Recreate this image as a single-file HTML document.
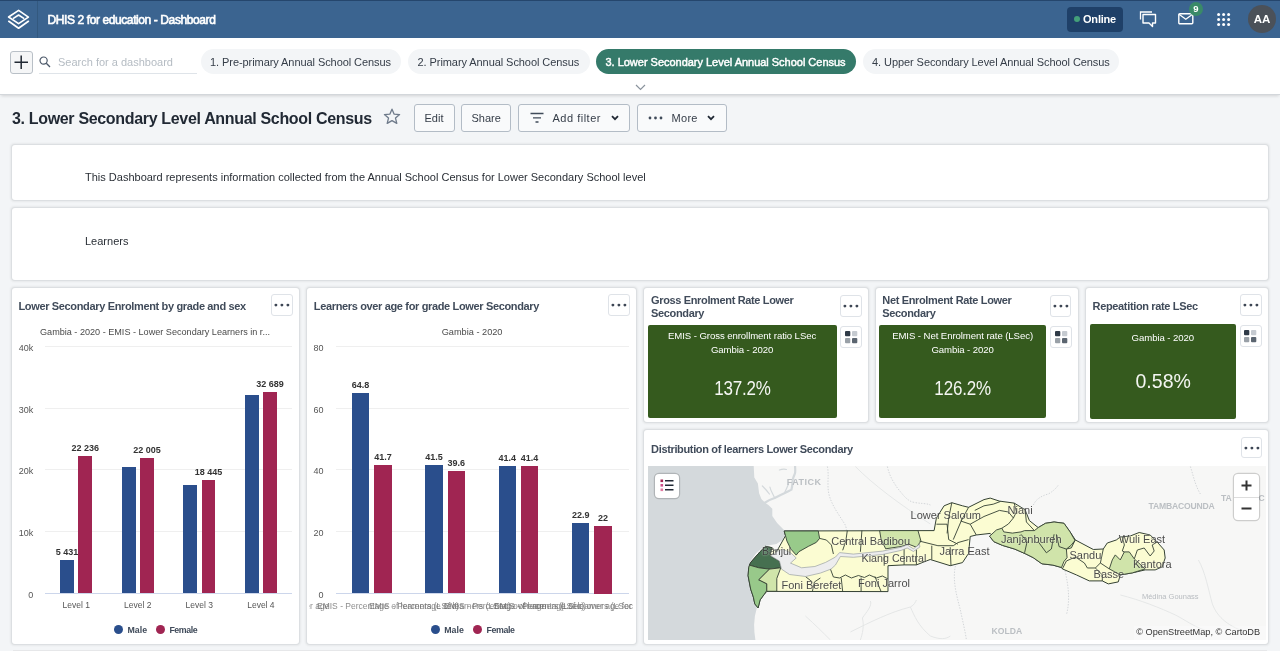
<!DOCTYPE html>
<html><head><meta charset="utf-8">
<style>
*{box-sizing:border-box;margin:0;padding:0}
html,body{width:1280px;height:651px;overflow:hidden;will-change:transform;background:#f3f5f7;font-family:"Liberation Sans",sans-serif;color:#212934}
.a{position:absolute}
.hdr{left:0;top:0;width:1280px;height:38px;background:#3b6490;border-top:1px solid #25466d}
.sep{left:37px;top:1px;width:1px;height:37px;background:#33597f}
.htitle{left:47.5px;top:12.6px;font-size:12px;font-weight:400;color:#fff;letter-spacing:-0.4px;-webkit-text-stroke:0.6px #fff}
.online{left:1067px;top:6.5px;width:55.5px;height:25px;background:#1f4068;border-radius:4px}
.dot{left:1073.5px;top:16px;width:6px;height:6px;border-radius:50%;background:#44a07a}
.onl{left:1083px;top:12.5px;font-size:11px;font-weight:700;color:#fff;letter-spacing:-0.2px}
.bar{left:0;top:38px;width:1280px;height:56.3px;background:#fff;box-shadow:0 1px 0 #d3d7db,0 3px 3px -1px rgba(0,0,0,0.14)}
.plus{left:10px;top:51px;width:22.5px;height:22.5px;border:1px solid #b9c0c7;border-radius:3px;background:#f5f6f7}
.search{left:39px;top:73px;width:158px;height:1px;background:#dfe4e9}
.sph{left:58px;top:55.5px;font-size:11px;color:#b5bcc3}
.chip{top:49px;height:25px;border-radius:13px;background:#f3f5f7;font-size:11px;color:#353d48;line-height:27.3px;padding-left:9.5px;white-space:nowrap;letter-spacing:-0.07px}
.chip.act{background:#357a6a;color:#fff;font-weight:400;letter-spacing:-0.02px;-webkit-text-stroke:0.45px #fff}
.ptitle{left:12px;top:110px;font-size:16px;font-weight:700;color:#212934;letter-spacing:-0.33px;white-space:nowrap}
.btn{top:104px;height:27.5px;border:1px solid #b3bcc6;border-radius:3px;background:#f9fafb;font-size:11px;color:#353d48;line-height:27px;white-space:nowrap}
.card{background:#fff;border-radius:3px;box-shadow:0 0 0 1px #dcdfe2, 0 0 2px 1.5px rgba(0,0,0,0.05)}
.txt{font-size:11px;color:#2a2f36;white-space:nowrap;margin-top:0.7px}
.ctitle{font-size:11px;font-weight:700;color:#404b5a;letter-spacing:-0.35px;white-space:nowrap}
.menu{width:21.5px;height:21.5px;border:1px solid #dfe3e8;border-radius:3px;background:#fff}
.menu i{position:absolute;top:8.7px;width:3.1px;height:3.1px;border-radius:50%;background:#3d4654}
.ax{font-size:8.5px;color:#666;white-space:nowrap}
.lbl{font-size:9px;font-weight:700;color:#333;white-space:nowrap}
.sv{font-size:9.6px;color:#fff;text-align:center;line-height:13.7px;letter-spacing:-0.08px}
.big{font-size:19px;color:#f4f6f2;text-align:center;letter-spacing:-1px}
.male{background:#2a4e8c}
.fem{background:#a02552}
</style></head><body>

<!-- HEADER -->
<div class="a hdr"></div>
<div class="a sep"></div>
<svg class="a" style="left:0;top:0" width="37" height="38" viewBox="0 0 37 38">
  <path d="M18.6 10.4 L28.4 17.1 L18.6 23.6 L8.6 17 Z" fill="none" stroke="#fff" stroke-width="1.7" stroke-linejoin="round"/>
  <path d="M13 18.6 L18.6 15 L24.2 18.6" fill="none" stroke="#fff" stroke-width="1.6" stroke-linejoin="round"/>
  <path d="M8.8 21.3 L18.6 28.2 L28.4 21.3" fill="none" stroke="#fff" stroke-width="1.7" stroke-linejoin="round" stroke-linecap="round"/>
</svg>
<div class="a htitle">DHIS 2 for education - Dashboard</div>
<div class="a online"></div>
<div class="a dot"></div>
<div class="a onl">Online</div>
<!-- chat icon -->
<svg class="a" style="left:1139px;top:10px" width="18" height="18" viewBox="0 0 18 18">
  <path d="M1.5 9.5 V2 H13" fill="none" stroke="#fff" stroke-width="1.3"/>
  <path d="M4 4.5 H16.5 V13 H13.5 V16.5 L10 13 H4 Z" fill="none" stroke="#fff" stroke-width="1.4" stroke-linejoin="round"/>
</svg>
<!-- mail icon -->
<svg class="a" style="left:1178px;top:13px" width="16" height="12" viewBox="0 0 16 12">
  <rect x="0.8" y="0.8" width="14" height="10" rx="1" fill="none" stroke="#fff" stroke-width="1.4"/>
  <path d="M1 1.3 L7.8 6.3 L14.6 1.3" fill="none" stroke="#fff" stroke-width="1.3"/>
</svg>
<div class="a" style="left:1189px;top:2px;width:14px;height:14px;border-radius:50%;background:#3a8a68"></div>
<div class="a" style="left:1189px;top:3px;width:14px;text-align:center;font-size:9.5px;font-weight:700;color:#fff">9</div>
<!-- apps -->
<svg class="a" style="left:1217px;top:12.5px" width="14" height="14" viewBox="0 0 14 14" fill="#fff">
  <circle cx="1.6" cy="1.6" r="1.5"/><circle cx="6.6" cy="1.6" r="1.5"/><circle cx="11.6" cy="1.6" r="1.5"/>
  <circle cx="1.6" cy="6.6" r="1.5"/><circle cx="6.6" cy="6.6" r="1.5"/><circle cx="11.6" cy="6.6" r="1.5"/>
  <circle cx="1.6" cy="11.6" r="1.5"/><circle cx="6.6" cy="11.6" r="1.5"/><circle cx="11.6" cy="11.6" r="1.5"/>
</svg>
<div class="a" style="left:1248px;top:5px;width:28px;height:28px;border-radius:50%;background:#4b5159"></div>
<div class="a" style="left:1248px;top:13px;width:28px;text-align:center;font-size:11.5px;font-weight:700;color:#fff">AA</div>

<!-- BAR -->
<div class="a bar"></div>
<div class="a plus"></div>
<svg class="a" style="left:14px;top:55px" width="15" height="15" viewBox="0 0 15 15"><path d="M7.2 0.5 V14 M0.5 7.2 H14" stroke="#212934" stroke-width="1.5"/></svg>
<svg class="a" style="left:39px;top:56px" width="12" height="12" viewBox="0 0 12 12"><circle cx="4.6" cy="4.6" r="3.6" fill="none" stroke="#4a5768" stroke-width="1.2"/><path d="M7.3 7.3 L11 11" stroke="#4a5768" stroke-width="1.3"/></svg>
<div class="a sph">Search for a dashboard</div>
<div class="a search"></div>
<div class="a chip" style="left:200.5px;width:200.5px">1. Pre-primary Annual School Census</div>
<div class="a chip" style="left:408px;width:181.5px">2. Primary Annual School Census</div>
<div class="a chip act" style="left:596px;width:259.5px">3. Lower Secondary Level Annual School Census</div>
<div class="a chip" style="left:862.5px;width:256px">4. Upper Secondary Level Annual School Census</div>
<svg class="a" style="left:635px;top:84px" width="11" height="7" viewBox="0 0 11 7"><path d="M1 1 L5.5 5.5 L10 1" fill="none" stroke="#8a939d" stroke-width="1.2"/></svg>

<!-- TITLE ROW -->
<div class="a ptitle">3. Lower Secondary Level Annual School Census</div>
<svg class="a" style="left:383px;top:108px" width="18" height="17" viewBox="0 0 18 17"><path d="M9 1.2 L11.2 6.2 L16.6 6.6 L12.5 10.1 L13.8 15.4 L9 12.6 L4.2 15.4 L5.5 10.1 L1.4 6.6 L6.8 6.2 Z" fill="none" stroke="#6e7a8a" stroke-width="1.3" stroke-linejoin="round"/></svg>
<div class="a btn" style="left:414px;width:40.5px;padding-left:9.5px">Edit</div>
<div class="a btn" style="left:461px;width:50px;padding-left:9.5px">Share</div>
<div class="a btn" style="left:518px;width:112px;padding-left:33.5px;letter-spacing:0.5px">Add filter</div>
<svg class="a" style="left:530px;top:112px" width="14" height="12" viewBox="0 0 14 12"><path d="M0.5 1.5 H13.5 M3 5.8 H11 M5.5 10 H8.5" stroke="#404b5a" stroke-width="1.3"/></svg>
<svg class="a" style="left:611px;top:115px" width="8" height="6" viewBox="0 0 8 6"><path d="M1 1.2 L4 4.2 L7 1.2" fill="none" stroke="#212934" stroke-width="1.8"/></svg>
<div class="a btn" style="left:636.5px;width:90px;padding-left:34px;letter-spacing:0.3px">More</div>
<svg class="a" style="left:648px;top:116px" width="16" height="4" viewBox="0 0 16 4" fill="#404b5a"><circle cx="2" cy="2" r="1.4"/><circle cx="7.5" cy="2" r="1.4"/><circle cx="13" cy="2" r="1.4"/></svg>
<svg class="a" style="left:707px;top:115px" width="8" height="6" viewBox="0 0 8 6"><path d="M1 1.2 L4 4.2 L7 1.2" fill="none" stroke="#212934" stroke-width="1.8"/></svg>

<!-- TEXT CARDS -->
<div class="a card" style="left:12px;top:145px;width:1256px;height:55px"></div>
<div class="a txt" style="left:85px;top:170px">This Dashboard represents information collected from the Annual School Census for Lower Secondary School level</div>
<div class="a card" style="left:12px;top:208px;width:1256px;height:72px"></div>
<div class="a txt" style="left:85px;top:234px">Learners</div>

<!--CHARTS-->
<div class="a" style="left:13px;top:650px;width:1254px;height:1px;background:#e6e7e9"></div>
<!--AB-->
<div class="a card" style="left:12px;top:288px;width:287.0px;height:356.0px"></div>
<div class="a ctitle" style="left:18.5px;top:300px">Lower Secondary Enrolment by grade and sex</div>
<div class="a menu" style="left:271px;top:294.2px"><svg class="a" style="left:0;top:0" width="20" height="20" viewBox="0 0 20 20" fill="#3d4654"><circle cx="3.9" cy="10.1" r="1.45"/><circle cx="9.9" cy="10.1" r="1.45"/><circle cx="15.9" cy="10.1" r="1.45"/></svg></div>
<div class="a ax" style="left:40px;top:326.5px;font-size:9.1px;color:#4a4a4a">Gambia - 2020 - EMIS - Lower Secondary Learners in r...</div>
<div class="a ax" style="right:1246.7px;top:589.9px;font-size:9px;color:#555">0</div>
<div class="a" style="left:45.4px;top:531.2px;width:246.3px;height:1px;background:#efefef"></div>
<div class="a ax" style="right:1246.7px;top:528.1px;font-size:9px;color:#555">10k</div>
<div class="a" style="left:45.4px;top:469.4px;width:246.3px;height:1px;background:#efefef"></div>
<div class="a ax" style="right:1246.7px;top:466.3px;font-size:9px;color:#555">20k</div>
<div class="a" style="left:45.4px;top:407.7px;width:246.3px;height:1px;background:#efefef"></div>
<div class="a ax" style="right:1246.7px;top:404.6px;font-size:9px;color:#555">30k</div>
<div class="a" style="left:45.4px;top:345.9px;width:246.3px;height:1px;background:#efefef"></div>
<div class="a ax" style="right:1246.7px;top:342.8px;font-size:9px;color:#555">40k</div>
<div class="a" style="left:45.4px;top:593.0px;width:246.3px;height:1px;background:#ccd6eb"></div>
<div class="a male" style="left:60.2px;top:559.9px;width:13.9px;height:33.6px"></div>
<div class="a lbl" style="left:37.1px;width:60px;text-align:center;top:546.9px">5 431</div>
<div class="a fem" style="left:78.4px;top:456.1px;width:13.9px;height:137.4px"></div>
<div class="a lbl" style="left:55.3px;width:60px;text-align:center;top:443.1px">22 236</div>
<div class="a ax" style="left:46.2px;width:60px;text-align:center;top:600px;color:#555">Level 1</div>
<div class="a male" style="left:121.8px;top:467.3px;width:13.9px;height:126.2px"></div>
<div class="a fem" style="left:140.0px;top:457.6px;width:13.9px;height:135.9px"></div>
<div class="a lbl" style="left:116.9px;width:60px;text-align:center;top:444.6px">22 005</div>
<div class="a ax" style="left:107.8px;width:60px;text-align:center;top:600px;color:#555">Level 2</div>
<div class="a male" style="left:183.3px;top:484.6px;width:13.9px;height:108.9px"></div>
<div class="a fem" style="left:201.5px;top:479.6px;width:13.9px;height:113.9px"></div>
<div class="a lbl" style="left:178.5px;width:60px;text-align:center;top:466.6px">18 445</div>
<div class="a ax" style="left:169.3px;width:60px;text-align:center;top:600px;color:#555">Level 3</div>
<div class="a male" style="left:244.9px;top:394.6px;width:13.9px;height:198.9px"></div>
<div class="a fem" style="left:263.1px;top:391.6px;width:13.9px;height:201.9px"></div>
<div class="a lbl" style="left:240.1px;width:60px;text-align:center;top:378.6px">32 689</div>
<div class="a ax" style="left:230.9px;width:60px;text-align:center;top:600px;color:#555">Level 4</div>
<div class="a male" style="left:114px;top:625px;width:9px;height:9px;border-radius:50%"></div>
<div class="a lbl" style="left:127.5px;top:624.5px;color:#404b5a;font-size:8.8px">Male</div>
<div class="a fem" style="left:156.3px;top:625px;width:9px;height:9px;border-radius:50%"></div>
<div class="a lbl" style="left:169.4px;top:624.5px;color:#404b5a;font-size:8.8px;letter-spacing:-0.4px">Female</div>
<div class="a card" style="left:307px;top:288px;width:329.0px;height:356.0px"></div>
<div class="a ctitle" style="left:313.8px;top:300px">Learners over age for grade Lower Secondary</div>
<div class="a menu" style="left:608.3px;top:294.2px"><svg class="a" style="left:0;top:0" width="20" height="20" viewBox="0 0 20 20" fill="#3d4654"><circle cx="3.9" cy="10.1" r="1.45"/><circle cx="9.9" cy="10.1" r="1.45"/><circle cx="15.9" cy="10.1" r="1.45"/></svg></div>
<div class="a ax" style="left:441.7px;width:60px;text-align:center;top:326.5px;font-size:9.2px;color:#4a4a4a">Gambia - 2020</div>
<div class="a ax" style="right:956.5px;top:589.9px;font-size:9px;color:#555">0</div>
<div class="a" style="left:335.5px;top:531.2px;width:293.5px;height:1px;background:#efefef"></div>
<div class="a ax" style="right:956.5px;top:528.1px;font-size:9px;color:#555">20</div>
<div class="a" style="left:335.5px;top:469.4px;width:293.5px;height:1px;background:#efefef"></div>
<div class="a ax" style="right:956.5px;top:466.3px;font-size:9px;color:#555">40</div>
<div class="a" style="left:335.5px;top:407.7px;width:293.5px;height:1px;background:#efefef"></div>
<div class="a ax" style="right:956.5px;top:404.6px;font-size:9px;color:#555">60</div>
<div class="a" style="left:335.5px;top:345.9px;width:293.5px;height:1px;background:#efefef"></div>
<div class="a ax" style="right:956.5px;top:342.8px;font-size:9px;color:#555">80</div>
<div class="a" style="left:335.5px;top:593.0px;width:293.5px;height:1px;background:#ccd6eb"></div>
<div class="a male" style="left:351.9px;top:393.3px;width:17.4px;height:200.2px"></div>
<div class="a lbl" style="left:330.6px;width:60px;text-align:center;top:380.3px">64.8</div>
<div class="a fem" style="left:374.2px;top:464.7px;width:17.4px;height:128.8px"></div>
<div class="a lbl" style="left:352.9px;width:60px;text-align:center;top:451.7px">41.7</div>
<div class="a male" style="left:425.3px;top:465.3px;width:17.4px;height:128.2px"></div>
<div class="a lbl" style="left:404.0px;width:60px;text-align:center;top:452.3px">41.5</div>
<div class="a fem" style="left:447.6px;top:471.2px;width:17.4px;height:122.3px"></div>
<div class="a lbl" style="left:426.3px;width:60px;text-align:center;top:458.2px">39.6</div>
<div class="a male" style="left:498.6px;top:465.6px;width:17.4px;height:127.9px"></div>
<div class="a lbl" style="left:477.3px;width:60px;text-align:center;top:452.6px">41.4</div>
<div class="a fem" style="left:520.9px;top:465.6px;width:17.4px;height:127.9px"></div>
<div class="a lbl" style="left:499.6px;width:60px;text-align:center;top:452.6px">41.4</div>
<div class="a male" style="left:572.0px;top:522.8px;width:17.4px;height:70.7px"></div>
<div class="a lbl" style="left:550.7px;width:60px;text-align:center;top:509.8px">22.9</div>
<div class="a fem" style="left:594.3px;top:525.5px;width:17.4px;height:68.0px"></div>
<div class="a lbl" style="left:573.0px;width:60px;text-align:center;top:512.5px">22</div>
<div class="a" style="left:307px;top:601px;left:309px;width:324px;height:12px;overflow:hidden">
<span class="a ax" style="left:-40.0px;top:0;color:#666;opacity:0.75">(LSec) over age</span>
<span class="a ax" style="left:8.0px;top:0;color:#666;opacity:0.75">EMIS - Percentage of learners (LSec)</span>
<span class="a ax" style="left:60.0px;top:0;color:#666;opacity:0.75">EMIS - Percentage of learners (LSec) over age</span>
<span class="a ax" style="left:135.0px;top:0;color:#666;opacity:0.75">EMIS - Percentage of learners (LSec)</span>
<span class="a ax" style="left:185.0px;top:0;color:#666;opacity:0.75">EMIS - Percentage of learners (LSec)</span>
<span class="a ax" style="left:250.0px;top:0;color:#666;opacity:0.75">(LSec) over age for</span>
</div>
<div class="a male" style="left:430.8px;top:625px;width:9px;height:9px;border-radius:50%"></div>
<div class="a lbl" style="left:444.3px;top:624.5px;color:#404b5a;font-size:8.8px">Male</div>
<div class="a fem" style="left:473.1px;top:625px;width:9px;height:9px;border-radius:50%"></div>
<div class="a lbl" style="left:486.6px;top:624.5px;color:#404b5a;font-size:8.8px;letter-spacing:-0.4px">Female</div>
<!--/AB-->
<!--CDE-->
<div class="a card" style="left:644px;top:288px;width:224.0px;height:134.0px"></div>
<div class="a ctitle" style="left:651px;top:294px;line-height:12.7px;white-space:normal;width:170px">Gross Enrolment Rate Lower Secondary</div>
<div class="a menu" style="left:840.4px;top:295.1px"><svg class="a" style="left:0;top:0" width="20" height="20" viewBox="0 0 20 20" fill="#3d4654"><circle cx="3.9" cy="10.1" r="1.45"/><circle cx="9.9" cy="10.1" r="1.45"/><circle cx="15.9" cy="10.1" r="1.45"/></svg></div>
<div class="a" style="left:647.6px;top:325.4px;width:189px;height:93.1px;background:#355a1e;border-radius:2px"></div>
<div class="a menu" style="left:840.4px;top:326.4px"><svg class="a" style="left:3.3px;top:3.8px" width="13" height="13" viewBox="0 0 13 13"><rect x="0" y="0" width="5.3" height="5.3" rx="1" fill="#2f3a47"/><rect x="7" y="0" width="5.3" height="5.3" rx="1" fill="#c5cad0"/><rect x="0" y="7" width="5.3" height="5.3" rx="1" fill="#99a0a7"/><rect x="7" y="7" width="5.3" height="5.3" rx="1" fill="#5b6570"/></svg></div>
<div class="a sv" style="left:647.6px;top:329.2px;width:189.0px;">EMIS - Gross enrollment ratio LSec<br>Gambia - 2020</div>
<div class="a big" style="left:647.6px;top:376.5px;width:189.0px;font-size:20px;letter-spacing:-0.2px;transform:scaleX(0.85)">137.2%</div>
<div class="a card" style="left:876px;top:288px;width:202.0px;height:134.0px"></div>
<div class="a ctitle" style="left:882.3px;top:294px;line-height:12.7px;white-space:normal;width:160px">Net Enrolment Rate Lower Secondary</div>
<div class="a menu" style="left:1049.8px;top:295.1px"><svg class="a" style="left:0;top:0" width="20" height="20" viewBox="0 0 20 20" fill="#3d4654"><circle cx="3.9" cy="10.1" r="1.45"/><circle cx="9.9" cy="10.1" r="1.45"/><circle cx="15.9" cy="10.1" r="1.45"/></svg></div>
<div class="a" style="left:878.9px;top:325.4px;width:167.4px;height:93.1px;background:#355a1e;border-radius:2px"></div>
<div class="a menu" style="left:1050.3px;top:326.4px"><svg class="a" style="left:3.3px;top:3.8px" width="13" height="13" viewBox="0 0 13 13"><rect x="0" y="0" width="5.3" height="5.3" rx="1" fill="#2f3a47"/><rect x="7" y="0" width="5.3" height="5.3" rx="1" fill="#c5cad0"/><rect x="0" y="7" width="5.3" height="5.3" rx="1" fill="#99a0a7"/><rect x="7" y="7" width="5.3" height="5.3" rx="1" fill="#5b6570"/></svg></div>
<div class="a sv" style="left:878.9px;top:329.2px;width:167.4px;">EMIS - Net Enrolment rate (LSec)<br>Gambia - 2020</div>
<div class="a big" style="left:878.9px;top:376.5px;width:167.4px;font-size:20px;letter-spacing:-0.2px;transform:scaleX(0.85)">126.2%</div>
<div class="a card" style="left:1086px;top:288px;width:182.0px;height:134.0px"></div>
<div class="a ctitle" style="left:1092.6px;top:300px">Repeatition rate LSec</div>
<div class="a menu" style="left:1240.1px;top:294.3px"><svg class="a" style="left:0;top:0" width="20" height="20" viewBox="0 0 20 20" fill="#3d4654"><circle cx="3.9" cy="10.1" r="1.45"/><circle cx="9.9" cy="10.1" r="1.45"/><circle cx="15.9" cy="10.1" r="1.45"/></svg></div>
<div class="a" style="left:1089.6px;top:323.8px;width:146.4px;height:95px;background:#355a1e;border-radius:2px"></div>
<div class="a menu" style="left:1240.1px;top:325.2px"><svg class="a" style="left:3.3px;top:3.8px" width="13" height="13" viewBox="0 0 13 13"><rect x="0" y="0" width="5.3" height="5.3" rx="1" fill="#2f3a47"/><rect x="7" y="0" width="5.3" height="5.3" rx="1" fill="#c5cad0"/><rect x="0" y="7" width="5.3" height="5.3" rx="1" fill="#99a0a7"/><rect x="7" y="7" width="5.3" height="5.3" rx="1" fill="#5b6570"/></svg></div>
<div class="a sv" style="left:1089.6px;top:330.5px;width:146.4px;">Gambia - 2020</div>
<div class="a big" style="left:1089.6px;top:369px;width:146.4px;font-size:21px;letter-spacing:0px;transform:scaleX(0.93)">0.58%</div>
<!--/CDE-->
<!--MAP-->
<div class="a card" style="left:644px;top:430px;width:624.0px;height:214.0px"></div>
<div class="a ctitle" style="left:651.1px;top:442.5px">Distribution of learners Lower Secondary</div>
<div class="a menu" style="left:1240.8px;top:436.6px"><svg class="a" style="left:0;top:0" width="20" height="20" viewBox="0 0 20 20" fill="#3d4654"><circle cx="3.9" cy="10.1" r="1.45"/><circle cx="9.9" cy="10.1" r="1.45"/><circle cx="15.9" cy="10.1" r="1.45"/></svg></div>
<svg class="a" style="left:647.6px;top:466px" width="618.2" height="174.1" viewBox="647.6 466 618.2 174.1">
<rect x="647.6" y="466" width="618.2" height="174.1" fill="#f7f7f6"/>
<path d="M647.6,466.0 L753.3,466.0 L753.9,477.6 L757.5,483.6 L758.7,493.2 L761.0,499.0 L764.7,502.8 L768.0,505.0 L771.9,508.7 L771.9,515.9 L776.7,523.1 L783.9,530.3 L785.0,534.0 L782.0,540.0 L776.0,544.0 L770.0,545.0 L764.0,546.2 L756.0,553.0 L750.8,560.0 L747.7,567.0 L747.7,576.0 L750.0,585.0 L752.5,594.0 L755.0,601.0 L756.5,607.8 L754.5,616.0 L753.7,624.8 L754.0,632.0 L755.0,640.1 L647.6,640.1 Z" fill="#d4d9dc"/>
<path d="M764,503 C768,500 771,499 774.3,498 C778,496 781,494.5 783.9,493.2 C787,491.5 789.5,490.5 791.1,489.6 C792,486 792,483 792.3,480 C793,476 794.7,474 794.7,472.8 C795,470 794.7,468 794.7,466.5" fill="none" stroke="#d4d9dc" stroke-width="2.2" stroke-linecap="round"/>
<path d="M774.3,498 C772,493 770,490 769.5,487 M769,494 C766,490 764,488 762,486 M783.9,493.2 C786,489 787,487 788,484 M779,470 C782,469 784,469 786,469.5" fill="none" stroke="#d4d9dc" stroke-width="1.2" stroke-linecap="round"/>
<path d="M827,466.5 C829,476 826,486 829,496 C832,506 838,514 843,522 C846,526 846,529 846,531 M887,466.5 C889,476 893,482 897,488 C902,494 906,500 912,502 C920,504 926,503 930,505 M1033,505 C1035,500 1040,496 1048,494 C1053,491 1056,488 1058,485 M1064,568 C1068,585 1070,600 1066,615 M955,566 C952,580 956,595 960,610 C962,620 965,632 966,640 M1190,466.5 C1193,476 1195,486 1200,494" fill="none" stroke="#c9cdd0" stroke-width="0.8" stroke-dasharray="1.4,1.4"/>
<path d="M1120,595 C1140,600 1160,608 1175,615 C1185,620 1195,628 1210,632 M1198,560 C1205,572 1208,590 1212,604 C1216,615 1225,625 1245,632 M805,616 C815,625 822,632 830,640 M855,466.5 C872,484 900,505 930,524" fill="none" stroke="#e3e5e5" stroke-width="0.9"/>
<path d="M870,601 C872,606 866,612 862,618 C864,626 862,634 860,640 M850,632 C870,622 890,612 910,607 C914,605 915,602 916,600 M910,607 C914,616 918,626 930,636 C940,640 946,639 950,636" fill="none" stroke="#e2e4e4" stroke-width="0.9"/>
<path d="M783.8,531.0 L933.7,530.6 L936.0,518.0 L943.7,505.8 L951.4,502.7 L962.1,505.8 L968.2,507.3 L983.6,499.6 L989.8,498.1 L999.0,501.1 L1013.8,503.1 L1024.7,509.7 L1029.0,520.6 L1037.8,527.6 L1045.1,523.3 L1053.7,522.0 L1063.6,523.3 L1069.7,531.9 L1075.0,540.0 L1092.9,549.5 L1102.9,549.0 L1106.9,543.0 L1115.9,540.0 L1119.9,537.0 L1129.9,536.0 L1138.8,532.5 L1149.8,535.0 L1156.8,542.0 L1163.8,550.0 L1164.8,558.0 L1161.8,566.9 L1154.8,569.9 L1144.8,569.9 L1131.9,572.9 L1119.9,574.9 L1117.9,581.9 L1107.9,583.9 L1101.9,580.9 L1088.9,580.9 L1076.0,574.9 L1062.0,568.9 L1061.1,567.5 L1052.5,565.1 L1041.5,563.8 L1032.9,557.7 L1025.5,554.0 L1014.4,549.1 L1002.1,545.4 L993.5,541.7 L989.2,536.2 L991.3,538.0 L1000.0,544.2 L989.8,533.4 L975.9,535.0 L969.8,536.5 L968.2,553.4 L962.1,562.6 L949.8,565.7 L929.8,559.5 L916.0,564.9 L903.7,564.9 L887.6,565.7 L887.6,591.6 L766.4,591.4 L763.7,594.5 L759.7,599.9 L757.7,607.9 L754.4,603.9 L753.0,597.2 L750.3,589.2 L747.7,575.8 L748.3,567.8 L750.3,562.4 L759.7,551.7 L765.1,546.4 L771.7,547.7 L776.0,552.0 L785.1,535.7 Z" fill="#fbfcd2" stroke="#334033" stroke-width="1" stroke-linejoin="round"/>
<path d="M783.8,531.0 L817.9,531.0 L819.2,538.4 L815.9,542.4 L807.9,546.4 L798.5,551.7 L795.8,555.1 L790.5,549.1 L786.5,541.0 L785.1,535.7 Z" fill="#98ca8a" stroke="#334033" stroke-width="0.9" stroke-linejoin="round"/>
<path d="M750.3,562.4 L759.7,551.7 L765.1,546.4 L771.7,547.7 L769.7,555.8 L779.1,561.1 L780.4,567.8 L769.1,569.1 L758.4,567.8 L749.0,565.1 Z" fill="#467050" stroke="#334033" stroke-width="0.9" stroke-linejoin="round"/>
<path d="M749.0,565.1 L758.4,567.8 L769.1,569.1 L765.1,573.1 L758.4,579.8 L766.4,583.8 L766.4,590.5 L763.7,594.5 L759.7,599.9 L757.7,607.9 L754.4,603.9 L753.0,597.2 L750.3,589.2 L747.7,575.8 L748.3,567.8 Z" fill="#98c98a" stroke="#334033" stroke-width="0.9" stroke-linejoin="round"/>
<path d="M769.1,569.1 L780.4,567.8 L776.4,578.5 L776.4,591.3 L766.4,591.3 L766.4,583.8 L758.4,579.8 L765.1,573.1 Z" fill="#d0e5aa" stroke="#334033" stroke-width="0.9" stroke-linejoin="round"/>
<path d="M879.2,530.6 L917.6,530.6 L920.6,541.1 L916.0,547.2 L908.3,544.2 L900.7,546.5 L885.3,548.8 L880.7,539.5 Z" fill="#d0e5aa" stroke="#334033" stroke-width="0.9" stroke-linejoin="round"/>
<path d="M989.2,536.2 L996.0,530.0 L1001.5,528.2 L1003.4,531.9 L1012.0,533.1 L1020.6,531.9 L1024.2,530.6 L1034.0,530.6 L1037.8,527.6 L1045.1,523.3 L1053.7,522.0 L1063.6,523.3 L1069.7,531.9 L1074.6,540.5 L1071.0,547.9 L1066.0,549.1 L1066.7,557.7 L1063.6,561.4 L1061.1,567.5 L1052.5,565.1 L1041.5,563.8 L1032.9,557.7 L1025.5,554.0 L1014.4,549.1 L1002.1,545.4 L993.5,541.7 Z" fill="#d0e4aa" stroke="#334033" stroke-width="0.9" stroke-linejoin="round"/>
<path d="M1108.9,568.9 L1111.9,559.9 L1114.9,554.9 L1119.9,559.9 L1123.9,551.9 L1128.9,551.9 L1133.9,558.9 L1144.8,568.9 L1131.9,572.9 L1119.9,574.9 Z" fill="#d0e4aa" stroke="#334033" stroke-width="0.9" stroke-linejoin="round"/>
<path d="M819.2,538.4 L826.0,540.0 L831.0,545.0 L833.0,554.0" fill="none" stroke="#334033" stroke-width="0.9" stroke-linejoin="round"/>
<path d="M846.9,530.6 L845.4,541.1 L842.3,550.3" fill="none" stroke="#334033" stroke-width="0.9" stroke-linejoin="round"/>
<path d="M861.5,530.6 L860.0,551.8" fill="none" stroke="#334033" stroke-width="0.9" stroke-linejoin="round"/>
<path d="M883.8,551.8 L883.8,565.7" fill="none" stroke="#334033" stroke-width="0.9" stroke-linejoin="round"/>
<path d="M903.7,547.2 L903.7,564.9" fill="none" stroke="#334033" stroke-width="0.9" stroke-linejoin="round"/>
<path d="M916.0,549.5 L916.0,564.9" fill="none" stroke="#334033" stroke-width="0.9" stroke-linejoin="round"/>
<path d="M919.1,541.1 L937.5,545.7 L952.9,545.7 L957.5,542.6 L968.2,539.6" fill="none" stroke="#334033" stroke-width="0.9" stroke-linejoin="round"/>
<path d="M931.4,545.7 L931.4,559.5" fill="none" stroke="#334033" stroke-width="0.9" stroke-linejoin="round"/>
<path d="M949.8,547.2 L950.6,565.7" fill="none" stroke="#334033" stroke-width="0.9" stroke-linejoin="round"/>
<path d="M812.0,591.4 L814.0,582.0 L820.0,578.0" fill="none" stroke="#334033" stroke-width="0.9" stroke-linejoin="round"/>
<path d="M805.0,576.5 L812.0,582.0" fill="none" stroke="#334033" stroke-width="0.9" stroke-linejoin="round"/>
<path d="M830.0,569.0 L833.0,577.0 L839.2,578.0 L845.0,575.0 L851.0,578.0 L858.0,575.5 L864.0,577.5 L869.0,575.0 L876.0,578.0 L882.0,576.0 L887.6,579.0" fill="none" stroke="#334033" stroke-width="0.9" stroke-linejoin="round"/>
<path d="M840.8,578.0 L842.3,591.6" fill="none" stroke="#334033" stroke-width="0.9" stroke-linejoin="round"/>
<path d="M860.7,577.5 L860.7,591.6" fill="none" stroke="#334033" stroke-width="0.9" stroke-linejoin="round"/>
<path d="M874.5,576.4 L880.7,591.6" fill="none" stroke="#334033" stroke-width="0.9" stroke-linejoin="round"/>
<path d="M936.0,524.2 L946.7,524.2 L948.3,539.6 L957.5,544.2" fill="none" stroke="#334033" stroke-width="0.9" stroke-linejoin="round"/>
<path d="M951.4,502.7 L948.3,518.0 L946.7,533.4" fill="none" stroke="#334033" stroke-width="0.9" stroke-linejoin="round"/>
<path d="M962.1,518.0 L952.9,539.6" fill="none" stroke="#334033" stroke-width="0.9" stroke-linejoin="round"/>
<path d="M968.2,507.3 L960.6,521.1 L969.8,524.2 L975.9,535.0" fill="none" stroke="#334033" stroke-width="0.9" stroke-linejoin="round"/>
<path d="M969.8,524.2 L983.6,516.5 L999.0,510.4 L1008.0,512.0 L1013.0,518.0 L1008.0,524.0 L1001.5,528.2" fill="none" stroke="#334033" stroke-width="0.9" stroke-linejoin="round"/>
<path d="M974.4,510.4 L983.6,505.8 L992.8,504.2 L1000.0,501.5" fill="none" stroke="#334033" stroke-width="0.9" stroke-linejoin="round"/>
<path d="M1013.8,503.1 L1016.0,512.0 L1013.0,518.0" fill="none" stroke="#334033" stroke-width="0.9" stroke-linejoin="round"/>
<path d="M1024.7,509.7 L1026.0,522.0 L1034.0,530.6" fill="none" stroke="#334033" stroke-width="0.9" stroke-linejoin="round"/>
<path d="M1024.2,552.8 L1026.7,541.7 L1020.6,534.3" fill="none" stroke="#334033" stroke-width="0.9" stroke-linejoin="round"/>
<path d="M1037.8,541.7 L1046.0,552.8 L1051.0,549.0 L1053.7,534.3" fill="none" stroke="#334033" stroke-width="0.9" stroke-linejoin="round"/>
<path d="M1056.0,534.3 L1058.7,546.6 L1066.0,549.1" fill="none" stroke="#334033" stroke-width="0.9" stroke-linejoin="round"/>
<path d="M1062.0,568.9 L1066.0,561.0 L1075.0,557.0 L1084.0,563.0 L1087.0,568.0 L1095.0,568.0 L1100.0,563.0 L1102.9,549.0" fill="none" stroke="#334033" stroke-width="0.9" stroke-linejoin="round"/>
<path d="M1066.0,549.1 L1071.0,545.0 L1075.0,540.0" fill="none" stroke="#334033" stroke-width="0.9" stroke-linejoin="round"/>
<path d="M1095.0,568.0 L1102.0,575.0 L1101.9,580.9" fill="none" stroke="#334033" stroke-width="0.9" stroke-linejoin="round"/>
<path d="M1100.0,563.0 L1108.9,568.9" fill="none" stroke="#334033" stroke-width="0.9" stroke-linejoin="round"/>
<path d="M1121.9,537.0 L1124.0,545.0 L1121.9,551.0 L1123.9,551.9" fill="none" stroke="#334033" stroke-width="0.9" stroke-linejoin="round"/>
<path d="M1133.9,558.9 L1137.0,550.0 L1143.8,548.0 L1149.8,556.0 L1153.8,551.0 L1151.8,545.0 L1156.8,542.0" fill="none" stroke="#334033" stroke-width="0.9" stroke-linejoin="round"/>
<path d="M770.4,555.8 L776.0,552.0 L782.0,549.0 L790.5,553.0 L795.8,558.0 L790.1,563.1 L801.2,567.8 L814.5,566.5 L825.2,562.4 L835.0,557.1 L839.2,552.6 L853.0,554.1 L882.2,551.1 L900.7,547.2 L906.8,544.9 L913.0,548.8 L919.1,544.2 L919.5,547.0 L913.0,551.5 L906.8,548.0 L900.7,550.4 L882.2,554.5 L853.0,557.3 L840.0,556.5 L835.0,565.1 L830.6,569.1 L819.9,573.1 L805.2,576.5 L789.1,574.5 L781.1,569.1 L779.1,561.1 Z" fill="#ededee" stroke="#9aa0a4" stroke-width="0.7" stroke-linejoin="round"/>
</svg>
<div class="a" style="left:762px;top:545.2px;font-size:10.5px;color:rgba(55,55,55,0.9);white-space:nowrap;text-shadow:0 0 2px rgba(255,255,255,0.7)">Banjul</div>
<div class="a" style="left:831.2px;top:535.3px;font-size:11px;color:rgba(55,55,55,0.9);white-space:nowrap;text-shadow:0 0 2px rgba(255,255,255,0.7)">Central Badibou</div>
<div class="a" style="left:861.6px;top:552.0px;font-size:10.7px;color:rgba(55,55,55,0.9);white-space:nowrap;text-shadow:0 0 2px rgba(255,255,255,0.7)">Kiang Central</div>
<div class="a" style="left:781.5px;top:579.3px;font-size:11px;color:rgba(55,55,55,0.9);white-space:nowrap;text-shadow:0 0 2px rgba(255,255,255,0.7)">Foni Berefet</div>
<div class="a" style="left:858px;top:576.5px;font-size:11px;color:rgba(55,55,55,0.9);white-space:nowrap;text-shadow:0 0 2px rgba(255,255,255,0.7)">Foni Jarrol</div>
<div class="a" style="left:910.6px;top:508.8px;font-size:11px;color:rgba(55,55,55,0.9);white-space:nowrap;text-shadow:0 0 2px rgba(255,255,255,0.7)">Lower Saloum</div>
<div class="a" style="left:1007.6px;top:503.8px;font-size:11px;color:rgba(55,55,55,0.9);white-space:nowrap;text-shadow:0 0 2px rgba(255,255,255,0.7)">Niani</div>
<div class="a" style="left:939.4px;top:545.0px;font-size:11px;color:rgba(55,55,55,0.9);white-space:nowrap;text-shadow:0 0 2px rgba(255,255,255,0.7)">Jarra East</div>
<div class="a" style="left:1001px;top:533.4px;font-size:11px;color:rgba(55,55,55,0.9);white-space:nowrap;text-shadow:0 0 2px rgba(255,255,255,0.7)">Janjanbureh</div>
<div class="a" style="left:1069.5px;top:548.8px;font-size:11px;color:rgba(55,55,55,0.9);white-space:nowrap;text-shadow:0 0 2px rgba(255,255,255,0.7)">Sandu</div>
<div class="a" style="left:1118.8px;top:533.4px;font-size:11px;color:rgba(55,55,55,0.9);white-space:nowrap;text-shadow:0 0 2px rgba(255,255,255,0.7)">Wuli East</div>
<div class="a" style="left:1133px;top:557.5px;font-size:11px;color:rgba(55,55,55,0.9);white-space:nowrap;text-shadow:0 0 2px rgba(255,255,255,0.7)">Kantora</div>
<div class="a" style="left:1093.6px;top:568.4px;font-size:11px;color:rgba(55,55,55,0.9);white-space:nowrap;text-shadow:0 0 2px rgba(255,255,255,0.7)">Basse</div>
<div class="a" style="left:786.7px;top:477.0px;font-size:9px;color:#bbbfc3;white-space:nowrap;font-weight:700;letter-spacing:0.5px">FATICK</div>
<div class="a" style="left:1148.5px;top:501.0px;font-size:8.6px;color:#bbbfc3;white-space:nowrap;font-weight:700;letter-spacing:-0.2px">TAMBACOUNDA</div>
<div class="a" style="left:1221px;top:492.5px;font-size:8.6px;color:#bbbfc3;white-space:nowrap;font-weight:700">TA</div>
<div class="a" style="left:1258.5px;top:492.5px;font-size:8.6px;color:#bbbfc3;white-space:nowrap;font-weight:700">C</div>
<div class="a" style="left:1141.9px;top:591.5px;font-size:7.5px;color:#b8bcc0;white-space:nowrap;">Médina Gounass</div>
<div class="a" style="left:991.6px;top:626.0px;font-size:8.6px;color:#bbbfc3;white-space:nowrap;font-weight:700">KOLDA</div>
<div class="a" style="left:655px;top:473.6px;width:24px;height:24.3px;background:#fff;border-radius:4px;box-shadow:0 0 0 1.2px rgba(0,0,0,0.17)"></div>
<svg class="a" style="left:660px;top:479px" width="14" height="13" viewBox="0 0 14 13"><rect x="0.5" y="0.5" width="2.6" height="2.6" fill="#a02552"/><rect x="0.5" y="5" width="2.6" height="2.6" fill="#d0508a"/><rect x="0.5" y="9.5" width="2.6" height="2.6" fill="#e07aa0"/><path d="M5 1.8 H13.5 M5 6.3 H13.5 M5 10.8 H13.5" stroke="#212934" stroke-width="1.5"/></svg>
<div class="a" style="left:1233.8px;top:473.6px;width:25px;height:46.8px;background:#fff;border-radius:4px;box-shadow:0 0 0 1.2px rgba(0,0,0,0.17)"></div>
<div class="a" style="left:1233.8px;top:497px;width:25px;height:1px;background:#ddd"></div>
<svg class="a" style="left:1241px;top:480px" width="11" height="11" viewBox="0 0 11 11"><path d="M5.5 0.5 V10.5 M0.5 5.5 H10.5" stroke="#333" stroke-width="2"/></svg>
<svg class="a" style="left:1241px;top:503px" width="11" height="11" viewBox="0 0 11 11"><path d="M0.5 5.5 H10.5" stroke="#333" stroke-width="2"/></svg>
<div class="a" style="left:1134px;top:626px;width:131.8px;height:14.1px;background:rgba(255,255,255,0.3)"></div>
<div class="a" style="left:1136.3px;top:627px;font-size:9.2px;color:#333;white-space:nowrap">© OpenStreetMap, © CartoDB</div>
<!--/MAP-->

</body></html>
